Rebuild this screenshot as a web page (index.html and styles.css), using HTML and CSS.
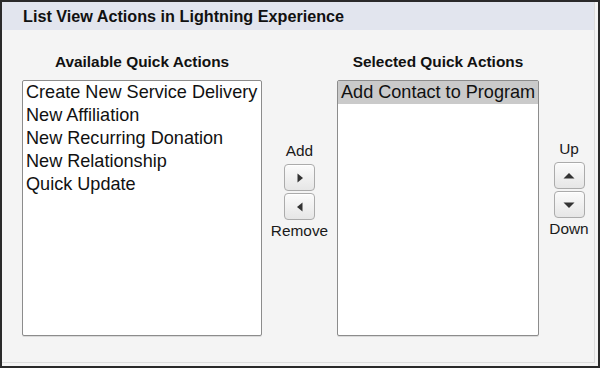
FILE: index.html
```html
<!DOCTYPE html>
<html>
<head>
<meta charset="utf-8">
<link rel="stylesheet" href="styles.css">
</head>
<body>
<div class="frame">
  <div class="panel">
    <div class="header">List View Actions in Lightning Experience</div>
    <div class="content">
      <div class="listcol left">
        <div class="coltitle">Available Quick Actions</div>
        <div class="listbox wide">
          <div class="opt">Create New Service Delivery</div>
          <div class="opt">New Affiliation</div>
          <div class="opt">New Recurring Donation</div>
          <div class="opt">New Relationship</div>
          <div class="opt">Quick Update</div>
        </div>
      </div>
      <div class="ctrlcol mid">
        <div class="ctrllabel">Add</div>
        <button class="btn first" aria-label="Add"><svg width="8" height="10" viewBox="0 0 8 10"><path d="M1.5 0.5 L7 5 L1.5 9.5 Z" fill="#333"/></svg></button>
        <button class="btn" aria-label="Remove"><svg width="8" height="10" viewBox="0 0 8 10"><path d="M6.5 0.5 L1 5 L6.5 9.5 Z" fill="#333"/></svg></button>
        <div class="ctrllabel last">Remove</div>
      </div>
      <div class="listcol right">
        <div class="coltitle">Selected Quick Actions</div>
        <div class="listbox narrow">
          <div class="opt selected">Add Contact to Program</div>
        </div>
      </div>
      <div class="ctrlcol side">
        <div class="ctrllabel">Up</div>
        <button class="btn first" aria-label="Up"><svg width="12" height="8" viewBox="0 0 12 8"><path d="M0.5 6.5 L6 1 L11.5 6.5 Z" fill="#333"/></svg></button>
        <button class="btn" aria-label="Down"><svg width="12" height="8" viewBox="0 0 12 8"><path d="M0.5 1.5 L6 7 L11.5 1.5 Z" fill="#333"/></svg></button>
        <div class="ctrllabel last">Down</div>
      </div>
    </div>
  </div>
</div>
</body>
</html>
```

FILE: styles.css
```css
html, body {
  margin: 0;
  padding: 0;
  background: #ffffff;
}
body {
  font-family: "Liberation Sans", Arial, Helvetica, sans-serif;
  color: #1a1a1a;
}
.frame {
  width: 600px;
  height: 368px;
  box-sizing: border-box;
  border: 2px solid #2a2a2a;
  background: #f4f4f4;
}
.panel {
  box-sizing: border-box;
  border-right: 1px solid #dcdcdc;
  border-bottom: 1px solid #dcdcdc;
  margin-right: 3px;
  height: 361px;
}
.header {
  height: 28px;
  line-height: 28px;
  background: #e2e5ee;
  font-weight: bold;
  font-size: 16.2px;
  padding-left: 21px;
  color: #111;
}
.content {
  display: flex;
  align-items: flex-start;
  padding: 23px 0 0 20px;
}
.listcol {
  display: flex;
  flex-direction: column;
  align-items: center;
  flex-shrink: 0;
}
.coltitle {
  font-weight: bold;
  font-size: 15.4px;
  line-height: 18px;
  margin-bottom: 9px;
  color: #111;
}
.listbox {
  height: 256px;
  box-sizing: border-box;
  border: 1px solid #8c8c8c;
  border-radius: 2px;
  background: #ffffff;
  box-shadow: 0 1px 0 #dadada;
}
.listbox.wide { width: 240px; }
.listbox.narrow { width: 202px; }
.opt {
  font-size: 18.1px;
  line-height: 23px;
  padding-left: 3px;
  white-space: nowrap;
  color: #111;
}
.opt.selected {
  background: #cacaca;
}
.ctrlcol {
  display: flex;
  flex-direction: column;
  align-items: center;
  flex-shrink: 0;
  padding-top: 89px;
}
.ctrlcol.mid { width: 75px; }
.ctrlcol.side { width: 60px; padding-top: 87px; }
.ctrllabel {
  font-size: 15.4px;
  line-height: 18px;
  color: #1a1a1a;
}
.ctrllabel.last { margin-top: 2px; }
.btn {
  width: 31px;
  height: 27px;
  box-sizing: border-box;
  border: 1px solid #ababab;
  border-radius: 4px;
  background: linear-gradient(#fbfbfb, #e6e6e6);
  box-shadow: inset 0 1px 0 #ffffff;
  padding: 0;
  margin-top: 2px;
  display: flex;
  align-items: center;
  justify-content: center;
}
.btn.first { margin-top: 4px; }
```
